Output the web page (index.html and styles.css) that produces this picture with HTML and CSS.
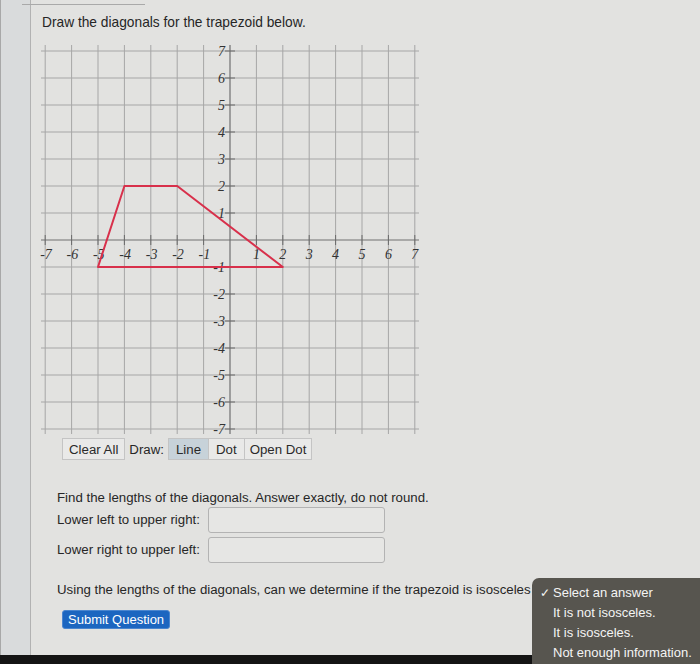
FILE: index.html
```html
<!DOCTYPE html>
<html lang="en">
<head>
<meta charset="utf-8">
<title>Trapezoid diagonals</title>
<link rel="stylesheet" href="styles.css">
</head>
<body>
<div class="page">
  <aside class="side"></aside>
  <main class="main">
    <div class="topline"></div>
    <p class="title">Draw the diagonals for the trapezoid below.</p>
    <svg class="graph" width="390" height="396" viewBox="0 0 390 396">
      <g class="grid">
        <line x1="5.2" y1="5" x2="5.2" y2="394"/>
        <line x1="31.6" y1="5" x2="31.6" y2="394"/>
        <line x1="58" y1="5" x2="58" y2="394"/>
        <line x1="84.4" y1="5" x2="84.4" y2="394"/>
        <line x1="110.8" y1="5" x2="110.8" y2="394"/>
        <line x1="137.2" y1="5" x2="137.2" y2="394"/>
        <line x1="163.6" y1="5" x2="163.6" y2="394"/>
        <line x1="216.4" y1="5" x2="216.4" y2="394"/>
        <line x1="242.8" y1="5" x2="242.8" y2="394"/>
        <line x1="269.2" y1="5" x2="269.2" y2="394"/>
        <line x1="295.6" y1="5" x2="295.6" y2="394"/>
        <line x1="322" y1="5" x2="322" y2="394"/>
        <line x1="348.4" y1="5" x2="348.4" y2="394"/>
        <line x1="374.8" y1="5" x2="374.8" y2="394"/>
        <line x1="1" y1="11" x2="379" y2="11"/>
        <line x1="1" y1="38" x2="379" y2="38"/>
        <line x1="1" y1="65" x2="379" y2="65"/>
        <line x1="1" y1="92" x2="379" y2="92"/>
        <line x1="1" y1="119" x2="379" y2="119"/>
        <line x1="1" y1="146" x2="379" y2="146"/>
        <line x1="1" y1="173" x2="379" y2="173"/>
        <line x1="1" y1="227" x2="379" y2="227"/>
        <line x1="1" y1="254" x2="379" y2="254"/>
        <line x1="1" y1="281" x2="379" y2="281"/>
        <line x1="1" y1="308" x2="379" y2="308"/>
        <line x1="1" y1="335" x2="379" y2="335"/>
        <line x1="1" y1="362" x2="379" y2="362"/>
        <line x1="1" y1="389" x2="379" y2="389"/>
      </g>
      <g class="axis">
        <line x1="190" y1="5" x2="190" y2="394"/>
        <line x1="1" y1="200" x2="379" y2="200"/>
      </g>
      <g class="ticks">
        <line x1="185" y1="11" x2="195" y2="11"/>
        <line x1="185" y1="38" x2="195" y2="38"/>
        <line x1="185" y1="65" x2="195" y2="65"/>
        <line x1="185" y1="92" x2="195" y2="92"/>
        <line x1="185" y1="119" x2="195" y2="119"/>
        <line x1="185" y1="146" x2="195" y2="146"/>
        <line x1="185" y1="173" x2="195" y2="173"/>
        <line x1="185" y1="227" x2="195" y2="227"/>
        <line x1="185" y1="254" x2="195" y2="254"/>
        <line x1="185" y1="281" x2="195" y2="281"/>
        <line x1="185" y1="308" x2="195" y2="308"/>
        <line x1="185" y1="335" x2="195" y2="335"/>
        <line x1="185" y1="362" x2="195" y2="362"/>
        <line x1="185" y1="389" x2="195" y2="389"/>
        <line x1="5.2" y1="195" x2="5.2" y2="205"/>
        <line x1="31.6" y1="195" x2="31.6" y2="205"/>
        <line x1="58" y1="195" x2="58" y2="205"/>
        <line x1="84.4" y1="195" x2="84.4" y2="205"/>
        <line x1="110.8" y1="195" x2="110.8" y2="205"/>
        <line x1="137.2" y1="195" x2="137.2" y2="205"/>
        <line x1="163.6" y1="195" x2="163.6" y2="205"/>
        <line x1="216.4" y1="195" x2="216.4" y2="205"/>
        <line x1="242.8" y1="195" x2="242.8" y2="205"/>
        <line x1="269.2" y1="195" x2="269.2" y2="205"/>
        <line x1="295.6" y1="195" x2="295.6" y2="205"/>
        <line x1="322" y1="195" x2="322" y2="205"/>
        <line x1="348.4" y1="195" x2="348.4" y2="205"/>
        <line x1="374.8" y1="195" x2="374.8" y2="205"/>
      </g>
      <g class="ylabels">
        <text x="185" y="16">7</text>
        <text x="185" y="43">6</text>
        <text x="185" y="70">5</text>
        <text x="185" y="97">4</text>
        <text x="185" y="124">3</text>
        <text x="185" y="151">2</text>
        <text x="185" y="178">1</text>
        <text x="185" y="232">-1</text>
        <text x="185" y="259">-2</text>
        <text x="185" y="286">-3</text>
        <text x="185" y="313">-4</text>
        <text x="185" y="340">-5</text>
        <text x="185" y="367">-6</text>
        <text x="185" y="394">-7</text>
      </g>
      <g class="xlabels">
        <text x="6" y="219">-7</text>
        <text x="32.4" y="219">-6</text>
        <text x="58.8" y="219">-5</text>
        <text x="85.2" y="219">-4</text>
        <text x="111.6" y="219">-3</text>
        <text x="138" y="219">-2</text>
        <text x="164.4" y="219">-1</text>
        <text x="216.4" y="219">1</text>
        <text x="242.8" y="219">2</text>
        <text x="269.2" y="219">3</text>
        <text x="295.6" y="219">4</text>
        <text x="322" y="219">5</text>
        <text x="348.4" y="219">6</text>
        <text x="374.8" y="219">7</text>
      </g>
      <polygon class="shape" points="84.4,146 137.2,146 242.8,227 58,227"/>
    </svg>
    <div class="tools">
      <button class="btn btn-clear">Clear All</button>
      <span class="draw-label">Draw:</span>
      <div class="seg">
        <button class="btn seg-btn is-active">Line</button>
        <button class="btn seg-btn">Dot</button>
        <button class="btn seg-btn btn-open">Open Dot</button>
      </div>
    </div>
    <section class="qa">
      <p class="q">Find the lengths of the diagonals. Answer exactly, do not round.</p>
      <div class="row">
        <label class="row-label" for="a1">Lower left to upper right:</label>
        <input class="ans" id="a1" type="text">
      </div>
      <div class="row">
        <label class="row-label" for="a2">Lower right to upper left:</label>
        <input class="ans" id="a2" type="text">
      </div>
      <p class="q2">Using the lengths of the diagonals, can we determine if the trapezoid is isosceles</p>
      <button class="submit">Submit Question</button>
    </section>
  </main>
</div>
<footer class="bar"></footer>
<ul class="menu">
  <li class="menu-item is-checked"><span class="check">✓</span>Select an answer</li>
  <li class="menu-item">It is not isosceles.</li>
  <li class="menu-item">It is isosceles.</li>
  <li class="menu-item">Not enough information.</li>
</ul>
</body>
</html>
```

FILE: styles.css
```css
html, body {
  margin: 0;
  padding: 0;
}
body {
  width: 700px;
  height: 664px;
  overflow: hidden;
  display: flex;
  flex-direction: column;
  background: #e2e2e0;
  color: #262626;
  font-family: "Liberation Sans", Arial, sans-serif;
  font-size: 13.25px;
  position: relative;
}
.page {
  flex: 1;
  display: flex;
}
.side {
  width: 29px;
  background: #d9dbdc;
  border-left: 1px solid #a8a8a8;
  border-right: 1px solid #b2b2b2;
  flex: none;
}
.main {
  flex: 1;
  padding-top: 4px;
}
.topline {
  height: 1px;
  width: 123px;
  margin-left: -9px;
  background: #a9a9a9;
}
.title {
  margin: 9px 0 9px 11px;
  font-size: 13.75px;
  line-height: 17px;
}
.graph {
  display: block;
  margin-left: 9px;
}
.grid line {
  stroke: #a6a6a6;
  stroke-width: 1;
}
.axis line {
  stroke: #707070;
  stroke-width: 1.2;
}
.ticks line {
  stroke: #6a6a6a;
  stroke-width: 1;
}
.ylabels text,
.xlabels text {
  font-family: "Liberation Serif", "Times New Roman", serif;
  font-style: italic;
  font-size: 14px;
  fill: #333;
}
.ylabels text {
  text-anchor: end;
}
.xlabels text {
  text-anchor: middle;
}
.shape {
  fill: none;
  stroke: #d8304b;
  stroke-width: 2;
  stroke-linejoin: round;
}
.tools {
  margin: 2px 0 0 31px;
  display: flex;
  align-items: center;
  height: 22px;
}
.btn {
  font-family: "Liberation Sans", Arial, sans-serif;
  font-size: 13.25px;
  color: #2a2a2a;
  height: 22px;
  padding: 0 7px;
  background: #e9e9e8;
  border: 1px solid #c4c4c4;
  border-radius: 0;
  margin: 0;
}
.btn-clear {
  padding: 0 6px;
}
.btn-open {
  padding: 0 5px;
}
.draw-label {
  margin: 0 4px 0 4px;
}
.seg {
  display: flex;
}
.seg-btn + .seg-btn {
  border-left: none;
}
.seg-btn.is-active {
  background: #c7d2d9;
}
.qa {
  margin: 30px 0 0 26px;
}
.q {
  margin: 0;
  line-height: 16px;
}
.row {
  display: grid;
  grid-template-columns: 151px 177px;
  align-items: center;
  margin-top: 1px;
}
.row + .row {
  margin-top: 4px;
}
.row-label {
  line-height: 16px;
}
.ans {
  box-sizing: border-box;
  width: 177px;
  height: 26px;
  margin: 0;
  background: #e6e6e4;
  border: 1px solid #b3b3b3;
  border-radius: 3px;
}
.q2 {
  margin: 19px 0 0 0;
  line-height: 16px;
  white-space: nowrap;
}
.submit {
  display: block;
  margin: 12px 0 0 5px;
  height: 19px;
  padding: 0 5px;
  background: #1c66c0;
  color: #fff;
  border: 1px solid #4a86cf;
  border-radius: 3px;
  font-family: "Liberation Sans", Arial, sans-serif;
  font-size: 13px;
}
.bar {
  height: 9px;
  background: #141414;
  flex: none;
}
.menu {
  position: absolute;
  left: 532px;
  top: 578px;
  width: 168px;
  height: 86px;
  box-sizing: border-box;
  margin: 0;
  padding: 5px 0 0 21px;
  list-style: none;
  background: #57554f;
  border-radius: 7px 0 0 0;
  color: #f4f4f4;
  font-family: "Liberation Sans", Arial, sans-serif;
  font-size: 13px;
}
.menu-item {
  position: relative;
  line-height: 20px;
}
.check {
  position: absolute;
  left: -13px;
  top: 0;
  font-size: 12px;
}
```
